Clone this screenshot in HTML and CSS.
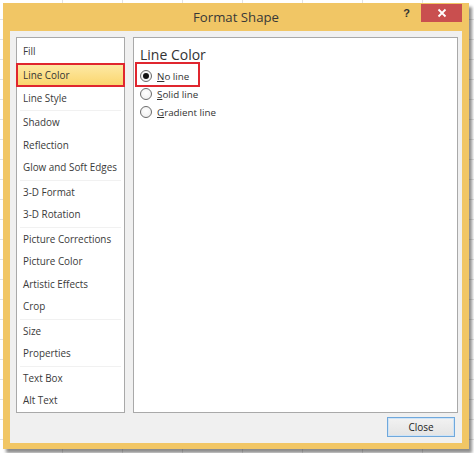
FILE: index.html
```html
<!DOCTYPE html>
<html>
<head>
<meta charset="utf-8">
<link rel="stylesheet" href="styles.css">
</head>
<body>
<div class="dialog">
  <div class="titlebar">
    <span class="spacer"></span>
    <span class="title">Format Shape</span>
    <div class="controls">
      <span class="help">?</span>
      <span class="close-x">
        <svg width="10" height="10" viewBox="0 0 10 10"><path d="M1.5 1.5 L8.5 8.5 M8.5 1.5 L1.5 8.5" stroke="#fff" stroke-width="1.8" fill="none"/></svg>
      </span>
    </div>
  </div>
  <div class="body">
    <div class="panels">
      <ul class="nav">
        <li class="item">Fill</li>
        <li class="item selected">Line Color</li>
        <li class="item">Line Style</li>
        <li class="sep"></li>
        <li class="item">Shadow</li>
        <li class="item">Reflection</li>
        <li class="item">Glow and Soft Edges</li>
        <li class="sep"></li>
        <li class="item">3-D Format</li>
        <li class="item">3-D Rotation</li>
        <li class="sep"></li>
        <li class="item">Picture Corrections</li>
        <li class="item">Picture Color</li>
        <li class="item">Artistic Effects</li>
        <li class="item">Crop</li>
        <li class="sep"></li>
        <li class="item">Size</li>
        <li class="item">Properties</li>
        <li class="sep"></li>
        <li class="item">Text Box</li>
        <li class="item">Alt Text</li>
      </ul>
      <div class="content">
        <h2 class="heading">Line Color</h2>
        <div class="highlight">
          <div class="radio-row"><span class="radio checked"></span><span class="label"><u>N</u>o line</span></div>
        </div>
        <div class="radio-row"><span class="radio"></span><span class="label"><u>S</u>olid line</span></div>
        <div class="radio-row"><span class="radio"></span><span class="label"><u>G</u>radient line</span></div>
      </div>
    </div>
    <div class="footer">
      <button class="btn">Close</button>
    </div>
  </div>
</div>
</body>
</html>
```
FILE: styles.css
```css
* { box-sizing: border-box; }
html, body { margin: 0; padding: 0; }
body {
  width: 474px;
  height: 453px;
  overflow: hidden;
  background-color: #fff;
  background-image:
    repeating-linear-gradient(90deg, transparent 0, transparent 59px, #e2e2e2 59px, #e2e2e2 60px),
    repeating-linear-gradient(180deg, transparent 0, transparent 19px, #e2e2e2 19px, #e2e2e2 20px);
  background-position: 3px 0, 0 0;
  font-family: "Open Sans", "Noto Sans", sans-serif;
  color: #333;
  padding-top: 3px;
  padding-left: 3px;
}
.dialog {
  width: 466px;
  height: 446px;
  background: #f1c665;
  box-shadow: 3px 4px 3px rgba(0,0,0,0.45);
  display: flex;
  flex-direction: column;
}
.titlebar {
  height: 28px;
  display: grid;
  grid-template-columns: 1fr auto 1fr;
  align-items: start;
}
.title {
  font-size: 13.2px;
  line-height: 28px;
  color: #383838;
}
.controls {
  display: flex;
  justify-content: flex-end;
  align-items: flex-start;
  padding-right: 7px;
}
.help {
  font-family: "Liberation Sans", Arial, sans-serif;
  font-weight: bold;
  font-size: 11px;
  color: #333;
  line-height: 18px;
  margin-top: 1px;
  margin-right: 11px;
}
.close-x {
  width: 41px;
  height: 18px;
  margin-top: 1px;
  background: #c94f4f;
  display: flex;
  align-items: center;
  justify-content: center;
}
.body {
  margin: 0 7px;
  height: 412px;
  background: #f0f0f0;
  padding: 6px 4px 0 6px;
}
.panels {
  display: flex;
  gap: 8px;
  height: 376px;
}
.nav {
  list-style: none;
  margin: 0;
  padding: 2px 0 0 0;
  width: 109px;
  background: #fff;
  border: 1px solid #a9a9a9;
  font-size: 9.9px;
}
.item {
  height: 22.5px;
  display: flex;
  align-items: center;
  padding-left: 6px;
  color: #3a3a3a;
  white-space: nowrap;
}
.item.selected {
  height: 24px;
  margin: 0 -1px;
  padding-left: 5px;
  border: 2px solid #e0262f;
  background: linear-gradient(#fde9a4, #fbd66f);
  color: #333;
}
.sep {
  height: 1px;
  margin: 1px 3px 0 3px;
  background: #f1f1f1;
}
.content {
  flex: 1;
  background: #fff;
  border: 1px solid #a9a9a9;
  padding: 9px 0 0 0;
}
.heading {
  margin: 0 0 0 6px;
  font-size: 14px;
  font-weight: normal;
  line-height: 15px;
  color: #333;
}
.highlight {
  width: fit-content;
  margin-left: 1px;
  margin-bottom: -2px;
  border: 2px solid #e0262f;
  padding: 3px 9px 0 3px;
}
.highlight .radio-row { padding-left: 0; }
.radio-row {
  height: 18px;
  display: flex;
  align-items: center;
  padding-left: 6px;
  font-size: 9.8px;
  color: #333;
}
.radio {
  width: 12px;
  height: 12px;
  border-radius: 50%;
  border: 1px solid #6b6b6b;
  background: radial-gradient(circle at 50% 40%, #ffffff, #ececec);
  margin-right: 5px;
  display: flex;
  align-items: center;
  justify-content: center;
}
.radio.checked::after {
  content: "";
  width: 6px;
  height: 6px;
  border-radius: 50%;
  background: #111;
}
.label u { text-underline-offset: 1px; }
.footer {
  display: flex;
  justify-content: flex-end;
  padding: 4px 3px 0 0;
}
.btn {
  width: 68px;
  height: 20px;
  border: 1px solid #6fa8dc;
  background: linear-gradient(#f2f2f2, #e4e4e4);
  font-family: "Open Sans", "Noto Sans", sans-serif;
  font-size: 10px;
  color: #222;
  padding: 0;
  box-shadow: inset 0 0 0 1px #cfe4f7;
}
```
